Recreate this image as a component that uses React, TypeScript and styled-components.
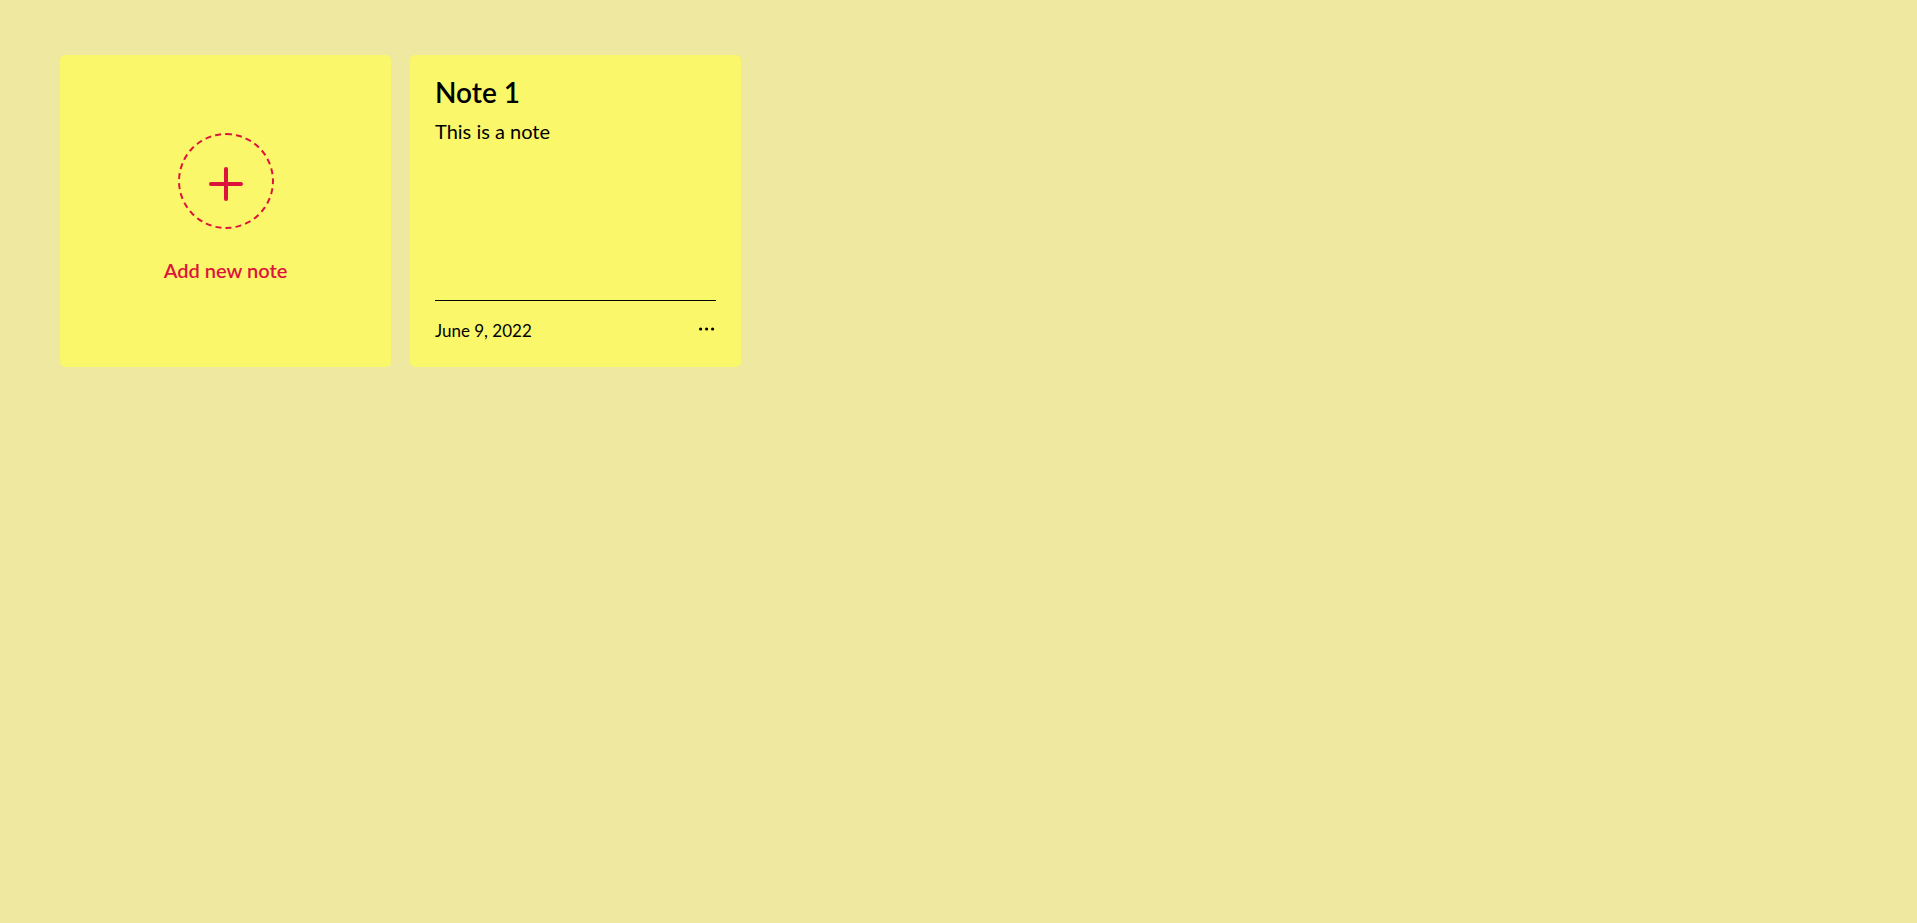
import React from 'react';
import styled, { createGlobalStyle } from 'styled-components';

const GlobalStyle = createGlobalStyle`
	html, body {
		margin: 0;
		padding: 0;
		background: #eee8a0;
		min-height: 100%;
	}
	body {
		font-family: Lato, 'Open Sans', sans-serif;
		color: #000;
	}
	* {
		box-sizing: border-box;
	}
`;

const Page = styled.div`
	min-height: 923px;
	background: #eee8a0;
	padding: 55px 60px;
`;

const NotesGrid = styled.div`
	display: grid;
	grid-template-columns: repeat(auto-fill, 331px);
	grid-auto-rows: 312px;
	gap: 19px;
`;

const Card = styled.div`
	background: #faf76a;
	border-radius: 5px;
	display: flex;
	flex-direction: column;
`;

const AddCard = styled(Card)`
	align-items: center;
	justify-content: center;
	cursor: pointer;
	color: #dc143c;
`;

const AddCircle = styled.div`
	width: 96px;
	height: 96px;
	border-radius: 50%;
	border: 2px dashed #dc143c;
	display: flex;
	align-items: center;
	justify-content: center;
	padding-top: 6px;
`;

const AddLabel = styled.p`
	margin: 29px 0 8px 0;
	font-size: 20px;
	font-weight: 600;
	line-height: 1.2;
`;

const NoteCard = styled(Card)`
	padding: 21px 25px 26px 25px;
`;

const NoteTitle = styled.h2`
	margin: 0;
	font-size: 28px;
	font-weight: 600;
	line-height: 1.2;
`;

const NoteBody = styled.p`
	margin: 9px 0 0 0;
	font-size: 20px;
	font-weight: 400;
	line-height: 1.2;
`;

const NoteFooter = styled.div`
	margin-top: auto;
	border-top: 1px solid #000;
	padding-top: 20px;
	display: flex;
	justify-content: space-between;
	align-items: center;
`;

const NoteDate = styled.span`
	font-size: 17px;
	line-height: 1.2;
`;

const MoreButton = styled.button`
	background: transparent;
	border: 0;
	padding: 0 0 3px 0;
	margin-right: 1px;
	cursor: pointer;
	display: flex;
	align-items: center;
	color: #000;
`;

const notes = [
	{
		id: 1,
		title: 'Note 1',
		body: 'This is a note',
		date: 'June 9, 2022',
	},
];

const App = () => {
	return (
		<Page>
			<GlobalStyle />
			<NotesGrid>
				<AddCard>
					<AddCircle>
						<svg width="34" height="34" viewBox="0 0 34 34" fill="none" stroke="currentColor" strokeWidth="4" strokeLinecap="round">
							<line x1="17" y1="2" x2="17" y2="32"></line>
							<line x1="2" y1="17" x2="32" y2="17"></line>
						</svg>
					</AddCircle>
					<AddLabel>Add new note</AddLabel>
				</AddCard>

				{notes.map((note) => (
					<NoteCard key={note.id}>
						<NoteTitle>{note.title}</NoteTitle>
						<NoteBody>{note.body}</NoteBody>
						<NoteFooter>
							<NoteDate>{note.date}</NoteDate>
							<MoreButton>
								<svg width="16" height="4" viewBox="0 0 16 4" fill="currentColor">
									<circle cx="1.6" cy="2" r="1.6"></circle>
									<circle cx="7.6" cy="2" r="1.6"></circle>
									<circle cx="13.6" cy="2" r="1.6"></circle>
								</svg>
							</MoreButton>
						</NoteFooter>
					</NoteCard>
				))}
			</NotesGrid>
		</Page>
	);
};

export default App;
